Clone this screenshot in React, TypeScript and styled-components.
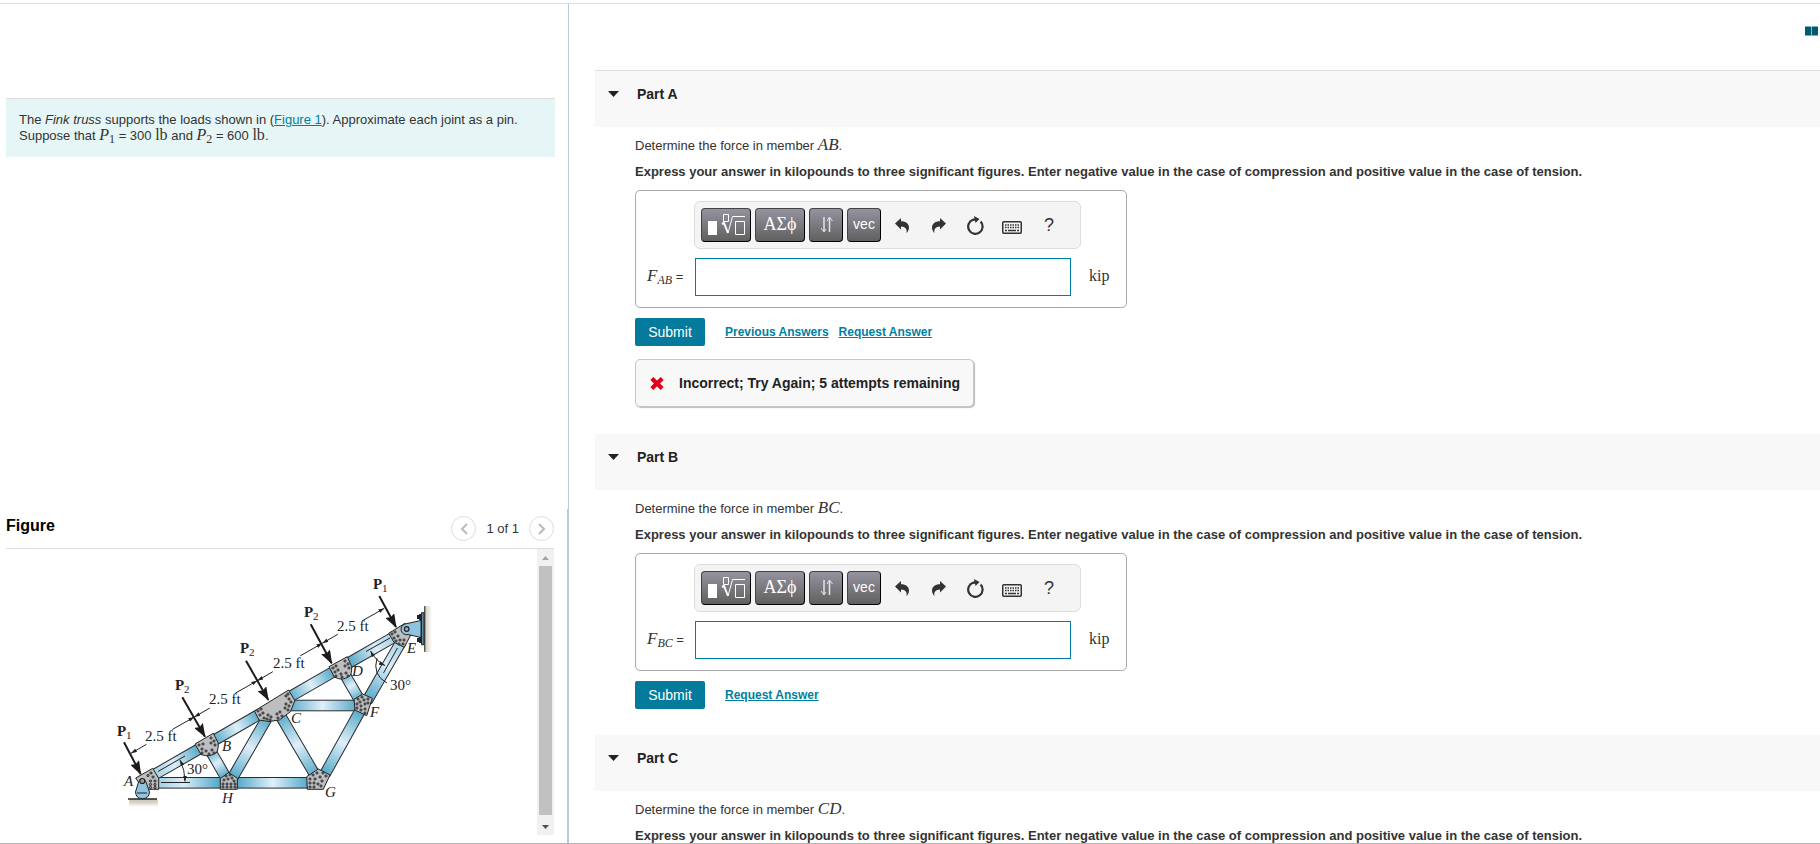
import React from "react";
import styled, { createGlobalStyle } from "styled-components";

const GlobalStyle = createGlobalStyle`
  *, *::before, *::after { box-sizing: border-box; }
  body {
    margin: 0;
    background: #fff;
    color: #333;
    font-family: "Liberation Sans", Arial, sans-serif;
    font-size: 13px;
    line-height: 16px;
  }
  button, input { font-family: inherit; }
`;

const Page = styled.div`
  display: flex;
  flex-direction: column;
  height: 100vh;
  padding-top: 3px;
  overflow: hidden;
  border-bottom: 1px solid #b4b4b4;
`;

const Columns = styled.div`
  display: grid;
  grid-template-columns: 569px minmax(0, 1fr);
  flex: 1;
  min-height: 0;
  border-top: 1px solid #ddd;
`;

const Sidebar = styled.aside`
  display: flex;
  flex-direction: column;
  min-height: 0;
`;

const ProblemPane = styled.section`
  flex: 1;
  padding: 94px 13px 0 6px;
  border-right: 1px solid #b9cadf;
`;

const ProblemText = styled.p`
  margin: 0;
  padding: 13px 13px;
  border-top: 1px solid #ddd;
  background: #e6f6f7;
`;

const Link = styled.a`
  color: #007fa3;
  text-decoration: underline;
`;

const Math = styled.span`
  font-family: "Liberation Serif", "Times New Roman", serif;
  font-size: 16px;
  line-height: 1px;
  sub {
    font-size: 12px;
    line-height: 1px;
    vertical-align: -3px;
  }
`;

const Member = styled(Math)`
  font-size: 17px;
  font-style: italic;
`;

const FigurePane = styled.section`
  padding: 0 13px 8px 6px;
  border-right: 2px solid #b9cadf;
`;

const FigureHeader = styled.header`
  display: flex;
  align-items: center;
  justify-content: space-between;
  height: 40px;
  border-bottom: 1px solid #ddd;
`;

const FigureTitle = styled.h2`
  margin: 0;
  padding-bottom: 6px;
  color: #000;
  font-size: 16px;
  line-height: 20px;
`;

const Pager = styled.nav`
  display: flex;
  align-items: center;
  gap: 10px;
  font-size: 13px;
`;

const PagerButton = styled.button`
  display: grid;
  place-items: center;
  width: 25px;
  height: 25px;
  padding: 0;
  border: 1px solid #ddd;
  border-radius: 50%;
  background: #fff;
  color: #bbb;
`;

const FigureViewport = styled.div`
  display: flex;
  height: 286px;
`;

const FigureCanvas = styled.div`
  flex: 1;
  display: flex;
  justify-content: center;
  padding-top: 21px;
`;

const ScrollTrack = styled.div`
  display: flex;
  flex-direction: column;
  align-items: center;
  justify-content: space-between;
  width: 17px;
  background: #f1f1f1;
`;

const ScrollButton = styled.button<{ $down?: boolean }>`
  display: grid;
  place-items: center;
  width: 17px;
  height: 17px;
  padding: 0;
  border: 0;
  background: transparent;
  color: ${(p) => (p.$down ? "#505050" : "#a3a3a3")};
`;

const ScrollThumb = styled.div`
  flex: 1;
  width: 13px;
  margin-bottom: 3px;
  background: #c1c1c1;
`;

const Main = styled.main`
  min-width: 0;
  padding-left: 26px;
  overflow: hidden;
`;

const TopBar = styled.div`
  display: flex;
  justify-content: flex-end;
  height: 66px;
  padding: 22px 2px 0 0;
  color: #005a70;
`;

const Parts = styled.div`
  border-top: 1px solid #ddd;
`;

const PartHeader = styled.header`
  display: flex;
  gap: 18px;
  height: 56px;
  padding: 15px 13px 0;
  background: #f8f8f8;
  color: #222;
`;

const Caret = styled.button`
  display: grid;
  place-items: center;
  width: 11px;
  height: 16px;
  padding: 0;
  border: 0;
  background: transparent;
  color: #222;
`;

const PartTitle = styled.h3`
  margin: 0;
  font-size: 14px;
  line-height: 16px;
`;

const PartBody = styled.div`
  padding: 11px 0 26px 40px;
`;

const Prompt = styled.p`
  margin: 0 0 10px;
`;

const Instruction = styled.p`
  margin: 0 0 10px;
  font-weight: bold;
`;

const AnswerBox = styled.div`
  width: 492px;
  padding: 10px 11px 11px;
  border: 1px solid #aaa;
  border-radius: 5px;
`;

const Toolbar = styled.div`
  display: flex;
  align-items: center;
  width: 387px;
  height: 48px;
  margin: 0 0 9px 47px;
  padding: 0 6px;
  border: 1px solid #ddd;
  border-radius: 6px;
  background: #f4f4f4;
`;

const PaletteButton = styled.button<{ $wide?: boolean; $serif?: boolean }>`
  display: grid;
  place-items: center;
  width: ${(p) => (p.$wide ? 50 : 34)}px;
  height: 34px;
  margin-right: 4px;
  padding: 0 0 2px;
  border: 1px solid #000;
  border-top-color: #444;
  border-left-color: #444;
  border-radius: 4px;
  background: linear-gradient(#95939f, #606060);
  color: #fff;
  font-family: ${(p) => (p.$serif ? '"Liberation Serif", serif' : "inherit")};
  font-size: ${(p) => (p.$serif ? 18 : 14)}px;
  line-height: 20px;
`;

const Tools = styled.div`
  display: flex;
  flex: 1;
  justify-content: space-between;
  padding-right: 8px;
`;

const ToolButton = styled.button`
  display: grid;
  place-items: center;
  width: 34px;
  height: 34px;
  padding: 0;
  border: 0;
  background: transparent;
  color: #333;
  font-size: 18px;
  line-height: 20px;
`;

const AnswerRow = styled.div`
  display: flex;
  align-items: center;
`;

const AnswerLabel = styled.label`
  width: 48px;
  white-space: nowrap;
`;

const AnswerInput = styled.input`
  width: 376px;
  height: 38px;
  padding: 0 8px;
  border: 1px solid #007fa3;
  border-radius: 0;
  background: #fff;
  font-size: 16px;
`;

const Unit = styled.span`
  margin-left: 18px;
`;

const Actions = styled.div`
  display: flex;
  align-items: center;
  gap: 10px;
  margin-top: 10px;
  font-size: 12px;
  font-weight: bold;
`;

const Submit = styled.button`
  width: 70px;
  height: 28px;
  margin-right: 10px;
  padding: 0;
  border: 0;
  border-radius: 2px;
  background: #047a9c;
  color: #fff;
  font-size: 14px;
`;

const Feedback = styled.div`
  display: flex;
  align-items: center;
  gap: 15px;
  width: 339px;
  height: 48px;
  margin: 13px 0 1px;
  padding-left: 14px;
  border: 1px solid #c6c6c6;
  border-radius: 5px;
  background: #f8f8f8;
  box-shadow: 1px 1px 1px #bbb;
  color: #222;
  font-size: 14px;
  font-weight: bold;
`;

const Chevron = ({ right = false }: { right?: boolean }) => (
  <svg width="8" height="12" viewBox="0 0 8 12" fill="none" stroke="currentColor" strokeWidth="2">
    <path d={right ? "M1 1l5 5-5 5" : "M7 1L2 6l5 5"} />
  </svg>
);

const ScrollArrow = ({ down = false }: { down?: boolean }) => (
  <svg width="7" height="4" viewBox="0 0 7 4" fill="currentColor">
    <path d={down ? "M0 0h7L3.5 4z" : "M0 4h7L3.5 0z"} />
  </svg>
);

const BookIcon = () => (
  <svg width="13" height="10" viewBox="0 0 13 10" fill="currentColor">
    <path d="M0 .5h6v9H0zM7 .5h6v9H7z" />
    <path d="M6 1h1v9H6z" opacity="0.45" />
  </svg>
);

const TemplateIcon = () => (
  <svg width="38" height="23" viewBox="0 0 38 23" fill="none" stroke="#fff">
    <path d="M1 8h9v14H1z" fill="#fff" stroke="none" />
    <path d="M16.500 1.500h5v7h-5zM28.500 8.500h9v13h-9z" />
    <path d="M15 11l2-1 4 10" strokeWidth="2" />
    <path d="M21 20l4.500-16.500H38" />
  </svg>
);

const UpDownIcon = () => (
  <svg width="13" height="17" viewBox="0 0 13 17" fill="none" stroke="#e4e4e4">
    <path d="M4 1v14M9.500 16V2" strokeWidth="1.500" />
    <path d="M1 12l3 4 2-3M7 5l2.500-4 3 4" />
  </svg>
);

const ReplyIcon = ({ flip = false }: { flip?: boolean }) => (
  <svg width="14" height="15" viewBox="0 0 14 15" fill="currentColor">
    <path
      transform={flip ? "translate(14 0) scale(-1 1)" : undefined}
      d="M0 5.500L6 0v3.300c5 0 8 2.700 8 6.200 0 2.300-1 4.200-2.600 5.500 1-3.800-.8-6.500-5.400-6.600V11.500z"
    />
  </svg>
);

const ResetIcon = () => (
  <svg width="17" height="19" viewBox="0 0 17 19" fill="none" stroke="currentColor" strokeWidth="2.200">
    <path d="M13.600 5.600A7.200 7.200 0 1 1 6 3.800L9 3.200" />
    <path d="M7 0l5.500 3L8.500 7z" fill="currentColor" stroke="none" />
  </svg>
);

const KeyboardIcon = () => (
  <svg width="20" height="19" viewBox="0 -5 20 19" fill="none" stroke="currentColor">
    <rect x="0.750" y="0.750" width="18.500" height="11.500" rx="1" strokeWidth="1.500" />
    <path d="M3 4h14M3 6.500h14" strokeDasharray="1.500 1" strokeWidth="1.500" />
    <path d="M3 9.500h2M6 9.500h8M15 9.500h2" strokeWidth="1.500" />
  </svg>
);

const WrongIcon = () => (
  <svg width="14" height="13" viewBox="0 0 14 13" stroke="#e1001a" strokeWidth="4.200">
    <path d="M1.800 1.500l10.400 10M12.200 1.500l-10.400 10" />
  </svg>
);

type Pt = [number, number];

/* A steel bar, shaded along its length. */
const Bar = ({ from, to, shade = "both" }: { from: Pt; to: Pt; shade?: string }) => {
  const dx = to[0] - from[0];
  const dy = to[1] - from[1];
  const length = globalThis.Math.hypot(dx, dy);
  const angle = (globalThis.Math.atan2(dy, dx) * 180) / globalThis.Math.PI;
  return (
    <rect
      x="0"
      y="-5.300"
      width={length}
      height="10.600"
      fill={`url(#steel-${shade})`}
      stroke="#2b2b2f"
      transform={`translate(${from[0]} ${from[1]}) rotate(${angle})`}
    />
  );
};

const Plate = ({ d, rivets }: { d: string; rivets: Pt[] }) => (
  <g stroke="#222">
    <path d={d} fill="#bcbec0" />
    {rivets.map(([x, y]) => (
      <circle key={`${x},${y}`} cx={x} cy={y} r="1.100" fill="#8d8f91" strokeWidth="0.900" />
    ))}
  </g>
);

const Load = ({ from, to, label, sub }: { from: Pt; to: Pt; label: Pt; sub: number }) => (
  <g>
    <path
      d={`M${from[0]} ${from[1]}L${to[0]} ${to[1]}`}
      stroke="#1f1a1b"
      strokeWidth="2"
      markerEnd="url(#load-head)"
    />
    <text x={label[0]} y={label[1]} fontWeight="bold">P</text>
    <text x={label[0] + 9} y={label[1] + 3} fontSize="11">{sub}</text>
  </g>
);

const Dimension = ({ from, to, text }: { from: Pt; to: Pt; text: Pt }) => (
  <g>
    <path d={`M${from[0]} ${from[1]}l15.500 -9`} stroke="#222" markerStart="url(#dim-head)" />
    <path d={`M${to[0] - 22} ${to[1] + 12.5}L${to[0]} ${to[1]}`} stroke="#222" markerEnd="url(#dim-head)" />
    <text x={text[0]} y={text[1]}>2.5 ft</text>
  </g>
);

const Truss = () => (
  <svg
    width="341"
    height="245"
    viewBox="101 570 341 245"
    fontFamily='"Liberation Serif", "Times New Roman", serif'
    fontSize="15"
    fill="#222"
    role="img"
    aria-label="Fink truss"
  >
    <defs>
      <linearGradient id="steel-both">
        <stop offset="0" stopColor="#55a9c8" />
        <stop offset="0.500" stopColor="#e0eff9" />
        <stop offset="1" stopColor="#55a9c8" />
      </linearGradient>
      <linearGradient id="steel-end">
        <stop offset="0" stopColor="#a4cfe2" />
        <stop offset="0.400" stopColor="#dcedf8" />
        <stop offset="1" stopColor="#4fa5c5" />
      </linearGradient>
      <linearGradient id="wall">
        <stop offset="0" stopColor="#cbc7b4" />
        <stop offset="1" stopColor="#fff" />
      </linearGradient>
      <linearGradient id="ground" x2="0" y2="1">
        <stop offset="0.300" stopColor="#cfcbb9" />
        <stop offset="1" stopColor="#fff" />
      </linearGradient>
      <marker id="load-head" viewBox="0 0 14 10" refX="13" refY="5" markerWidth="14" markerHeight="10" markerUnits="userSpaceOnUse" orient="auto">
        <path d="M0 0l14 5-14 5 2-5z" fill="#1f1a1b" />
      </marker>
      <marker id="dim-head" viewBox="0 0 6 4" refX="6" refY="2" markerWidth="6" markerHeight="4" markerUnits="userSpaceOnUse" orient="auto-start-reverse">
        <path d="M0 0l6 2-6 2z" fill="#222" />
      </marker>
    </defs>

    <rect x="129" y="799" width="29" height="8" rx="3" fill="url(#ground)" />
    <path d="M128 799h29" stroke="#222" strokeWidth="1.500" />
    <rect x="424" y="606" width="8" height="46" rx="3" fill="url(#wall)" />

    <Bar from={[158, 782.8]} to={[221, 782.8]} shade="end" />
    <Bar from={[237, 782.8]} to={[308, 782.8]} />
    <Bar from={[155, 774.3]} to={[201, 747.9]} shade="end" />
    <Bar from={[214, 740.4]} to={[259, 714.5]} />
    <Bar from={[289, 697.3]} to={[333, 672]} />
    <Bar from={[394, 637]} to={[348, 663.4]} shade="end" />
    <Bar from={[288, 705.5]} to={[357, 705.5]} />
    <Bar from={[210, 750]} to={[225, 776]} />
    <Bar from={[267, 718]} to={[233, 777]} />
    <Bar from={[280, 715]} to={[315, 775]} />
    <Bar from={[344, 673]} to={[359, 699]} />
    <Bar from={[401, 642]} to={[367, 701]} shade="end" />
    <Bar from={[360, 711]} to={[325, 774]} />

    <Plate
      d="M135.700 778L152.700 768.300 158.700 778.300V789.300H147L139 783z"
      rivets={[[151, 773], [153, 777], [148, 775.500], [155, 781], [155, 784.500], [155, 787.500], [150.500, 781], [150.500, 784.500], [150.500, 787.500]]}
    />
    <Plate
      d="M195 744L213.300 733.300 218 742.700Q219 747 217 752Q210 758 201 754.500z"
      rivets={[[199, 745], [202, 749], [203, 744], [211, 738], [214, 741], [211, 743], [215, 745], [202, 753], [206, 751], [209, 754], [212, 750], [214, 753]]}
    />
    <Plate
      d="M254.500 711L288.600 690 294.900 700.700 290.400 711.700 279.300 720Q269 723 259 720z"
      rivets={[[258, 711], [261, 709], [260, 715], [263, 713], [264, 718], [268, 715], [267, 719], [271, 717], [270, 720], [277, 714], [280, 712], [278, 718], [282, 716], [286, 696], [288, 694], [289, 699], [291, 702], [286, 704], [289, 706], [285, 708], [288, 710]]}
    />
    <Plate
      d="M329 666.700L347.300 656.700 351.700 666.700Q352 671 350.700 675Q343 682 334.300 677z"
      rivets={[[333, 668], [336, 666], [335, 672], [338, 670], [345, 661], [348, 664], [345, 666], [349, 668], [336, 676], [341, 674], [342, 677], [346, 673], [348, 676]]}
    />
    <Plate
      d="M388.700 633.300L405 623.300 410.700 635 404.300 647.300 394 642.300z"
      rivets={[[392, 634], [395, 632], [394, 638], [398, 636], [396, 641], [400, 640], [404, 640], [399, 644], [403, 644]]}
    />
    <Plate
      d="M362.700 694L372.300 698.300 366.700 715.700 355 710 354 699.300z"
      rivets={[[358, 699], [362, 697], [360, 702], [364, 700], [368, 699], [357, 704], [357, 708], [361, 706], [365, 704], [368, 703], [361, 710], [365, 709], [365, 713]]}
    />
    <Plate
      d="M220.300 789.300V778.500L228.700 772.700 237.300 778V789.300z"
      rivets={[[226, 776], [230, 775], [224, 780], [228, 779], [232, 778], [234, 781], [223, 784], [227, 784], [231, 784], [235, 784], [223, 787], [227, 787], [231, 787], [235, 787]]}
    />
    <Plate
      d="M306.700 776.700L318.300 769 330 775 323.300 789.300H307.300z"
      rivets={[[313, 775], [317, 773], [315, 779], [320, 777], [323, 773], [326, 776], [322, 781], [310, 779], [310, 783], [310, 787], [314, 783], [314, 787], [318, 784], [321, 786]]}
    />

    <path d="M138.500 782L135.500 792Q136 798.700 142.500 798.700T149.500 792L146 782A4 4 0 0 0 138.500 782z" fill="#8fc4de" stroke="#222" />
    <path d="M137 793h10" stroke="#222" />
    <circle cx="142.300" cy="781" r="2.500" fill="#9b9da0" stroke="#222" strokeWidth="1.200" />

    <path d="M405 624L421 620.500V637.500L408 634.500A5 5 0 0 1 405 624z" fill="#8fc4de" stroke="#222" />
    <circle cx="406.700" cy="629" r="2.300" fill="#aaa" stroke="#222" strokeWidth="1.200" />
    <path d="M421.500 612.700h2.500v32h-2.500z" fill="#5d8fa9" stroke="#222" />
    <path d="M418 615v4M420 614v6M418 638v4M420 637v6" stroke="#222" strokeWidth="2" />
    <path d="M424.800 606v46" stroke="#222" />

    <g stroke="#222" fill="none">
      <path d="M158 771.500L185 756M161 782.500h29M366 651.500l24-13.500M383.500 673l14-25" />
      <path d="M180 760Q185 770 185 781.500" markerStart="url(#dim-head)" markerEnd="url(#dim-head)" />
      <path d="M370.500 651Q376 661 385 665.500" markerStart="url(#dim-head)" markerEnd="url(#dim-head)" />
      <path d="M377 658Q372 675 387 683" />
    </g>

    <Load from={[124, 742.3]} to={[140.7, 774]} label={[117, 736]} sub={1} />
    <Load from={[182.3, 697.3]} to={[205, 736.7]} label={[175, 690]} sub={2} />
    <Load from={[246, 660.7]} to={[268.3, 700]} label={[240, 653]} sub={2} />
    <Load from={[310.7, 624.3]} to={[331.7, 663.3]} label={[304, 617]} sub={2} />
    <Load from={[379.3, 596]} to={[396, 627]} label={[373, 589]} sub={1} />

    <Dimension from={[131, 753.3]} to={[194.3, 717]} text={[145, 741]} />
    <Dimension from={[194.3, 717]} to={[257.3, 680.7]} text={[209, 704]} />
    <Dimension from={[257.3, 680.7]} to={[322.3, 643.3]} text={[273, 668]} />
    <Dimension from={[322.3, 643.3]} to={[384.3, 608.3]} text={[337, 631]} />

    <g fontStyle="italic">
      <text x="124" y="786">A</text>
      <text x="222" y="751">B</text>
      <text x="291" y="723">C</text>
      <text x="352" y="676">D</text>
      <text x="407" y="653">E</text>
      <text x="370" y="717">F</text>
      <text x="325" y="797">G</text>
      <text x="222" y="803">H</text>
    </g>
    <text x="187" y="774">30°</text>
    <text x="390" y="690">30°</text>
  </svg>
);

const AnswerForm = ({ member }: { member: string }) => (
  <AnswerBox>
    <Toolbar role="toolbar" aria-label="Equation tools">
      <PaletteButton $wide aria-label="Templates"><TemplateIcon /></PaletteButton>
      <PaletteButton $wide $serif>ΑΣϕ</PaletteButton>
      <PaletteButton aria-label="Arrows"><UpDownIcon /></PaletteButton>
      <PaletteButton>vec</PaletteButton>
      <Tools>
        <ToolButton aria-label="Undo"><ReplyIcon /></ToolButton>
        <ToolButton aria-label="Redo"><ReplyIcon flip /></ToolButton>
        <ToolButton aria-label="Reset"><ResetIcon /></ToolButton>
        <ToolButton aria-label="Keyboard shortcuts"><KeyboardIcon /></ToolButton>
        <ToolButton>?</ToolButton>
      </Tools>
    </Toolbar>
    <AnswerRow>
      <AnswerLabel htmlFor={`force-${member}`}>
        <Member>F<sub>{member}</sub></Member> =
      </AnswerLabel>
      <AnswerInput id={`force-${member}`} type="text" />
      <Unit><Math>kip</Math></Unit>
    </AnswerRow>
  </AnswerBox>
);

interface PartProps {
  name: string;
  member: string;
  answerable?: boolean;
  attempted?: boolean;
}

const Part = ({ name, member, answerable, attempted }: PartProps) => (
  <section>
    <PartHeader>
      <Caret aria-label={`Collapse ${name}`}>
        <svg width="11" height="6" viewBox="0 0 11 6" fill="currentColor"><path d="M0 0h11L5.500 6z" /></svg>
      </Caret>
      <PartTitle>{name}</PartTitle>
    </PartHeader>
    <PartBody>
      <Prompt>Determine the force in member <Member>{member}</Member>.</Prompt>
      <Instruction>
        Express your answer in kilopounds to three significant figures. Enter negative value in the case of compression and positive value in the case of tension.
      </Instruction>
      {answerable && (
        <>
          <AnswerForm member={member} />
          <Actions>
            <Submit>Submit</Submit>
            {attempted && <Link href="#previous">Previous Answers</Link>}
            <Link href="#request">Request Answer</Link>
          </Actions>
        </>
      )}
      {attempted && (
        <Feedback role="status">
          <WrongIcon />
          Incorrect; Try Again; 5 attempts remaining
        </Feedback>
      )}
    </PartBody>
  </section>
);

export default function App() {
  return (
    <Page>
      <GlobalStyle />
      <Columns>
        <Sidebar>
          <ProblemPane>
            <ProblemText>
              The <i>Fink truss</i> supports the loads shown in (<Link href="#figure">Figure 1</Link>). Approximate each joint as a pin.
              <br />
              Suppose that <Math><i>P</i><sub>1</sub></Math> = 300 <Math>lb</Math> and <Math><i>P</i><sub>2</sub></Math> = 600 <Math>lb</Math>.
            </ProblemText>
          </ProblemPane>
          <FigurePane id="figure">
            <FigureHeader>
              <FigureTitle>Figure</FigureTitle>
              <Pager aria-label="Figures">
                <PagerButton aria-label="Previous figure"><Chevron /></PagerButton>
                <span>1 of 1</span>
                <PagerButton aria-label="Next figure"><Chevron right /></PagerButton>
              </Pager>
            </FigureHeader>
            <FigureViewport>
              <FigureCanvas><Truss /></FigureCanvas>
              <ScrollTrack>
                <ScrollButton aria-label="Scroll up"><ScrollArrow /></ScrollButton>
                <ScrollThumb />
                <ScrollButton $down aria-label="Scroll down"><ScrollArrow down /></ScrollButton>
              </ScrollTrack>
            </FigureViewport>
          </FigurePane>
        </Sidebar>
        <Main>
          <TopBar><BookIcon /></TopBar>
          <Parts>
            <Part name="Part A" member="AB" answerable attempted />
            <Part name="Part B" member="BC" answerable />
            <Part name="Part C" member="CD" />
          </Parts>
        </Main>
      </Columns>
    </Page>
  );
}
